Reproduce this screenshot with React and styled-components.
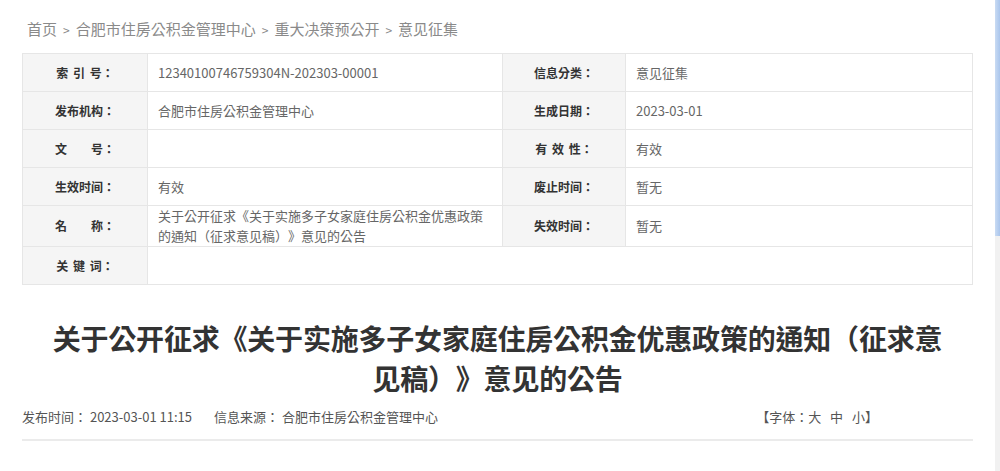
import React from 'react';
import styled, { createGlobalStyle } from 'styled-components';

const GlobalStyle = createGlobalStyle`
	html, body {
		margin: 0;
		padding: 0;
		background: #fff;
		font-family: "Noto Sans CJK TC", "Noto Sans CJK SC", "Noto Sans", sans-serif;
		text-spacing-trim: space-all;
	}
`;

const Page = styled.div`
	display: flex;
	min-height: 471px;
`;

const Main = styled.main`
	flex: 1;
	padding: 19px 22px 0 22px;
`;

const ScrollTrack = styled.aside`
	width: 5px;
	background: #f1f1f1;
	height: 471px;
`;

const ScrollThumb = styled.div`
	height: 236px;
	background: linear-gradient(to right, #c9dbf3, #a9c5ec);
`;

const Crumbs = styled.nav`
	padding-left: 5px;
	font-size: 15px;
	line-height: 20px;
	color: #8a8a8a;
	margin-bottom: 13px;
`;

const Sep = styled.span`
	font-size: 12px;
	margin: 0 6px;
`;

const InfoGrid = styled.div`
	display: grid;
	grid-template-columns: 125px 355px 123px 1fr;
	border-top: 1px solid #e6e6e6;
	border-left: 1px solid #e6e6e6;
`;

const Cell = styled.div`
	min-height: 37px;
	border-right: 1px solid #e6e6e6;
	border-bottom: 1px solid #e6e6e6;
	display: flex;
	align-items: center;
	font-size: ${(p) => (p.$label ? '12px' : '13px')};
	font-weight: ${(p) => (p.$label ? 700 : 400)};
	color: ${(p) => (p.$label ? '#333' : '#666')};
	background: ${(p) => (p.$label ? '#f5f5f5' : '#fff')};
	justify-content: ${(p) => (p.$label ? 'center' : 'flex-start')};
	padding: ${(p) => (p.$label ? '0' : '0 12px 0 10px')};
	word-spacing: ${(p) => (p.$label ? '2px' : '0')};
	line-height: 20px;
	white-space: ${(p) => (p.$label ? 'pre' : 'normal')};
	grid-column: ${(p) => p.$span || 'auto'};
`;

const Title = styled.h1`
	margin: 33px 0 0 0;
	padding: 0 20px;
	text-align: center;
	font-size: 28px;
	letter-spacing: -0.2px;
	line-height: 40px;
	font-weight: 700;
	color: #333;
`;

const Meta = styled.div`
	display: flex;
	justify-content: space-between;
	margin-top: 9px;
	padding-bottom: 12px;
	border-bottom: 2px solid #ebebeb;
	font-size: 13px;
	line-height: 20px;
	color: #555;
`;

const MetaItem = styled.span`
	margin-right: 22px;
`;

const FontSize = styled.span`
	padding-right: 95px;
	word-spacing: 6px;
`;

const rows = [
	['索 引 号：', '12340100746759304N-202303-00001', '信息分类：', '意见征集'],
	['发布机构：', '合肥市住房公积金管理中心', '生成日期：', '2023-03-01'],
	['文　　号：', '', '有 效 性：', '有效'],
	['生效时间：', '有效', '废止时间：', '暂无'],
	['名　　称：', '关于公开征求《关于实施多子女家庭住房公积金优惠政策的通知（征求意见稿）》意见的公告', '失效时间：', '暂无'],
];

export default function App() {
	return (
		<Page>
			<GlobalStyle />
			<Main>
				<Crumbs>
					首页<Sep>&gt;</Sep>合肥市住房公积金管理中心<Sep>&gt;</Sep>重大决策预公开<Sep>&gt;</Sep>意见征集
				</Crumbs>
				<InfoGrid>
					{rows.map((r) => (
						<React.Fragment key={r[0]}>
							<Cell $label>{r[0]}</Cell>
							<Cell>{r[1]}</Cell>
							<Cell $label>{r[2]}</Cell>
							<Cell>{r[3]}</Cell>
						</React.Fragment>
					))}
					<Cell $label>关 键 词：</Cell>
					<Cell $span="2 / 5"></Cell>
				</InfoGrid>
				<Title>关于公开征求《关于实施多子女家庭住房公积金优惠政策的通知（征求意见稿）》意见的公告</Title>
				<Meta>
					<span>
						<MetaItem>发布时间： 2023-03-01 11:15</MetaItem>
						<span>信息来源： 合肥市住房公积金管理中心</span>
					</span>
					<FontSize>【字体：大 中 小】</FontSize>
				</Meta>
			</Main>
			<ScrollTrack>
				<ScrollThumb />
			</ScrollTrack>
		</Page>
	);
}
